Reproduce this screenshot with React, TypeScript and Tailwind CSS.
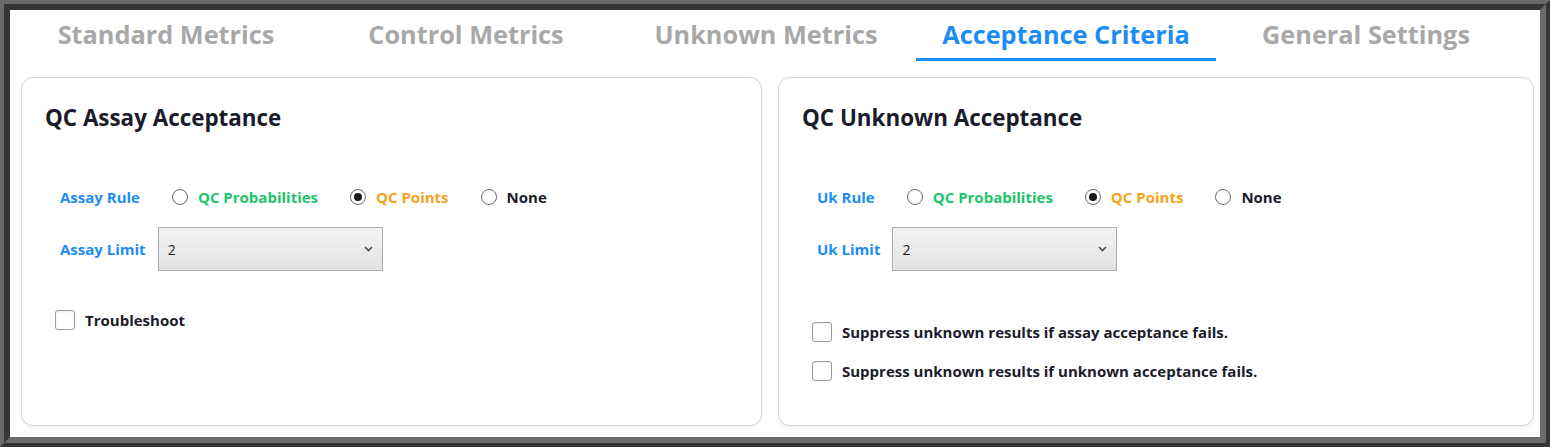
import { useState } from "react";

const tabs = ["Standard Metrics", "Control Metrics", "Unknown Metrics", "Acceptance Criteria", "General Settings"];

type RuleOption = { value: string; label: string; color: string };

const ruleOptions: RuleOption[] = [
  { value: "prob", label: "QC Probabilities", color: "text-[#1ec46a]" },
  { value: "points", label: "QC Points", color: "text-[#f7a21b]" },
  { value: "none", label: "None", color: "text-[#1b1b2b]" },
];

function RadioGroup({ name, value, onChange }: { name: string; value: string; onChange: (v: string) => void }) {
  return (
    <div className="ml-[17px] flex items-center gap-[32px]">
      {ruleOptions.map(option => (
        <label key={option.value} className="flex cursor-pointer items-center gap-[10px]">
          <span className="flex h-[16px] w-[16px] items-center justify-center rounded-full border border-[#6a6a6a] bg-white">
            {value === option.value && <span className="h-[8px] w-[8px] rounded-full bg-[#1a1a1a]" />}
          </span>
          <input type="radio" name={name} className="hidden" checked={value === option.value} onChange={() => onChange(option.value)} />
          <span className={`text-[15px] font-bold ${option.color}`}>{option.label}</span>
        </label>
      ))}
    </div>
  );
}

function LimitSelect({ value, onChange }: { value: string; onChange: (v: string) => void }) {
  return (
    <div className="relative h-[44px] w-[225px]">
      <select
        className="h-full w-full appearance-none border border-[#adadad] bg-gradient-to-b from-[#f3f3f3] to-[#e3e3e3] pl-[9px] text-[14px] text-[#1b1b1b] outline-none"
        value={value}
        onChange={e => onChange(e.target.value)}
      >
        {["1", "2", "3", "4", "5"].map(n => (
          <option key={n} value={n}>{n}</option>
        ))}
      </select>
      <svg className="pointer-events-none absolute right-[10px] top-[19px]" width="9" height="6" viewBox="0 0 9 6">
        <path d="M1 1l3.5 3.5L8 1" fill="none" stroke="#4a4a4a" strokeWidth="1.6" />
      </svg>
    </div>
  );
}

function Checkbox({ label, checked, onChange }: { label: string; checked: boolean; onChange: () => void }) {
  return (
    <label className="flex cursor-pointer items-center gap-[10px]" onClick={onChange}>
      <span className="flex h-[20px] w-[20px] items-center justify-center rounded-[3px] border border-[#9a9a9a] bg-white shadow-[inset_0_1px_2px_rgba(0,0,0,0.08)]">
        {checked && (
          <svg width="12" height="10" viewBox="0 0 12 10">
            <path d="M1 5l3.5 3.5L11 1" fill="none" stroke="#222" strokeWidth="2" />
          </svg>
        )}
      </span>
      <span className="text-[15px] font-bold leading-[20px] text-[#1b1b2b]">{label}</span>
    </label>
  );
}

function Panel({ title, children, className }: { title: string; children: React.ReactNode; className: string }) {
  return (
    <section className={`h-[349px] rounded-[12px] border border-[#d9d9d9] bg-white pt-[25px] shadow-[0_1px_3px_rgba(0,0,0,0.08)] ${className}`}>
      <h2 className="pl-[23px] text-[22.4px] font-bold leading-[30px] text-[#1b1b2b]">{title}</h2>
      {children}
    </section>
  );
}

export default function App() {
  const [activeTab, setActiveTab] = useState("Acceptance Criteria");
  const [assayRule, setAssayRule] = useState("points");
  const [ukRule, setUkRule] = useState("points");
  const [assayLimit, setAssayLimit] = useState("2");
  const [ukLimit, setUkLimit] = useState("2");
  const [troubleshoot, setTroubleshoot] = useState(false);
  const [suppressAssay, setSuppressAssay] = useState(false);
  const [suppressUnknown, setSuppressUnknown] = useState(false);

  return (
    <div className="h-[447px] w-[1550px] border-4 border-t-[#6a6a6a] border-l-[#6a6a6a] border-r-[#343434] border-b-[#343434] font-['Open_Sans',sans-serif]">
      <div className="flex h-full flex-col border-[6px] border-t-[#363636] border-l-[#363636] border-r-[#6a6a6a] border-b-[#6a6a6a] bg-white">
        <nav className="ml-[6px] flex h-[51px]">
          {tabs.map(tab => (
            <button
              key={tab}
              onClick={() => setActiveTab(tab)}
              className={`w-[300px] pt-[1px] text-[25.3px] font-bold ${
                activeTab === tab ? "border-b-[3px] border-[#1e8cf5] text-[#1e8cf5]" : "border-b-[3px] border-transparent text-[#a8a8a8]"
              }`}
            >
              {tab}
            </button>
          ))}
        </nav>

        <div className="mt-[16px] flex gap-[16px] pl-[11px] pr-[6px]">
          <Panel title="QC Assay Acceptance" className="w-[741px]">
            <div className="mt-[52px] flex h-[24px] items-center pl-[38px]">
              <span className="mr-[15px] text-[15px] font-bold text-[#1e8cf5]">Assay Rule</span>
              <RadioGroup name="assayRule" value={assayRule} onChange={setAssayRule} />
            </div>
            <div className="mt-[18px] flex items-center pl-[38px]">
              <span className="mr-[12px] text-[15px] font-bold text-[#1e8cf5]">Assay Limit</span>
              <LimitSelect value={assayLimit} onChange={setAssayLimit} />
            </div>
            <div className="mt-[39px] pl-[33px]">
              <Checkbox label="Troubleshoot" checked={troubleshoot} onChange={() => setTroubleshoot(!troubleshoot)} />
            </div>
          </Panel>

          <Panel title="QC Unknown Acceptance" className="w-[756px]">
            <div className="mt-[52px] flex h-[24px] items-center pl-[38px]">
              <span className="mr-[15px] text-[15px] font-bold text-[#1e8cf5]">Uk Rule</span>
              <RadioGroup name="ukRule" value={ukRule} onChange={setUkRule} />
            </div>
            <div className="mt-[18px] flex items-center pl-[38px]">
              <span className="mr-[12px] text-[15px] font-bold text-[#1e8cf5]">Uk Limit</span>
              <LimitSelect value={ukLimit} onChange={setUkLimit} />
            </div>
            <div className="mt-[51px] flex flex-col gap-[19px] pl-[33px]">
              <Checkbox label="Suppress unknown results if assay acceptance fails." checked={suppressAssay} onChange={() => setSuppressAssay(!suppressAssay)} />
              <Checkbox label="Suppress unknown results if unknown acceptance fails." checked={suppressUnknown} onChange={() => setSuppressUnknown(!suppressUnknown)} />
            </div>
          </Panel>
        </div>
      </div>
    </div>
  );
}
